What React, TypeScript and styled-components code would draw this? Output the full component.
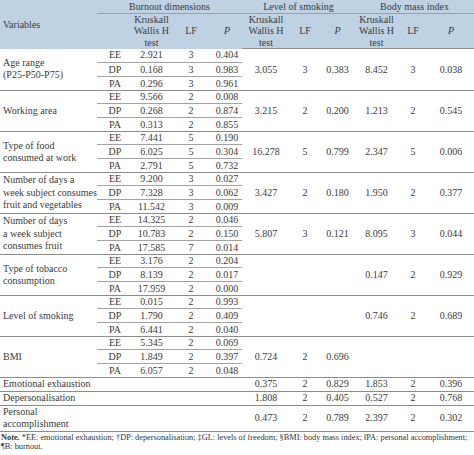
import React from "react";
import styled, { createGlobalStyle } from "styled-components";

const GlobalStyle = createGlobalStyle`
  html, body {
    margin: 0;
    padding: 0;
    background: #ffffff;
  }
  body {
    font-family: "Liberation Serif", "Times New Roman", serif;
    color: #3b3b3b;
  }
`;

const Page = styled.div`
  width: 474px;
  overflow: hidden;
`;

const Table = styled.table`
  width: 474px;
  border-collapse: collapse;
  table-layout: fixed;
  font-size: 10px;
`;

const HeadCell = styled.th<{ $left?: boolean; $underline?: boolean; $italic?: boolean }>`
  background: #bfd2e4;
  font-weight: normal;
  font-style: ${(p) => (p.$italic ? "italic" : "normal")};
  padding: 0 0 0 ${(p) => (p.$left ? "3px" : "0")};
  text-align: ${(p) => (p.$left ? "left" : "center")};
  line-height: 11.5px;
  white-space: nowrap;
  color: #3a3a3a;
  border-bottom: ${(p) => (p.$underline ? "1px solid #8fa3b8" : "none")};
`;

const GroupRow = styled.tr`
  height: 13px;
`;

const SubHeadRow = styled.tr`
  height: 34px;
`;

const BodyRow = styled.tr<{ $h?: number }>`
  height: ${(p) => p.$h ?? 14}px;
`;

const Label = styled.td<{ $top?: boolean }>`
  padding: 0 0 0 3px;
  text-align: left;
  vertical-align: middle;
  line-height: 12.5px;
  white-space: nowrap;
  border-top: ${(p) => (p.$top ? "1px solid #8c8c8c" : "none")};
`;

const Cell = styled.td<{ $line?: "group" | "sub" | "none" }>`
  padding: 0;
  text-align: center;
  vertical-align: middle;
  line-height: 12px;
  white-space: nowrap;
  border-top: ${(p) =>
    p.$line === "group"
      ? "1px solid #8c8c8c"
      : p.$line === "sub"
      ? "1px solid #a3a3a3"
      : "none"};
`;

const LastRow = styled.tr<{ $h?: number }>`
  height: ${(p) => p.$h ?? 24}px;
  border-bottom: 1px solid #8c8c8c;
`;

const Note = styled.p`
  margin: 0;
  padding: 1px 0 0 1px;
  font-size: 8.3px;
  line-height: 9.5px;
  white-space: nowrap;
  color: #333;
`;

const Bold = styled.b`
  font-weight: bold;
`;

type Triple = [string, string, string];

type Group = {
  label: string[];
  rows: [string, string, string, string][];
  smoke: Triple | null;
  bmi: Triple | null;
};

const groups: Group[] = [
  {
    label: ["Age range", "(P25-P50-P75)"],
    rows: [
      ["EE", "2.921", "3", "0.404"],
      ["DP", "0.168", "3", "0.983"],
      ["PA", "0.296", "3", "0.961"],
    ],
    smoke: ["3.055", "3", "0.383"],
    bmi: ["8.452", "3", "0.038"],
  },
  {
    label: ["Working area"],
    rows: [
      ["EE", "9.566", "2", "0.008"],
      ["DP", "0.268", "2", "0.874"],
      ["PA", "0.313", "2", "0.855"],
    ],
    smoke: ["3.215", "2", "0.200"],
    bmi: ["1.213", "2", "0.545"],
  },
  {
    label: ["Type of food", "consumed at work"],
    rows: [
      ["EE", "7.441", "5", "0.190"],
      ["DP", "6.025", "5", "0.304"],
      ["PA", "2.791", "5", "0.732"],
    ],
    smoke: ["16.278", "5", "0.799"],
    bmi: ["2.347", "5", "0.006"],
  },
  {
    label: ["Number of days a", "week subject consumes", "fruit and vegetables"],
    rows: [
      ["EE", "9.200", "3", "0.027"],
      ["DP", "7.328", "3", "0.062"],
      ["PA", "11.542", "3", "0.009"],
    ],
    smoke: ["3.427", "2", "0.180"],
    bmi: ["1.950", "2", "0.377"],
  },
  {
    label: ["Number of days", "a week subject", "consumes fruit"],
    rows: [
      ["EE", "14.325", "2", "0.046"],
      ["DP", "10.783", "2", "0.150"],
      ["PA", "17.585", "7", "0.014"],
    ],
    smoke: ["5.807", "3", "0.121"],
    bmi: ["8.095", "3", "0.044"],
  },
  {
    label: ["Type of tobacco", "consumption"],
    rows: [
      ["EE", "3.176", "2", "0.204"],
      ["DP", "8.139", "2", "0.017"],
      ["PA", "17.959", "2", "0.000"],
    ],
    smoke: null,
    bmi: ["0.147", "2", "0.929"],
  },
  {
    label: ["Level of smoking"],
    rows: [
      ["EE", "0.015", "2", "0.993"],
      ["DP", "1.790", "2", "0.409"],
      ["PA", "6.441", "2", "0.040"],
    ],
    smoke: null,
    bmi: ["0.746", "2", "0.689"],
  },
  {
    label: ["BMI"],
    rows: [
      ["EE", "5.345", "2", "0.069"],
      ["DP", "1.849", "2", "0.397"],
      ["PA", "6.057", "2", "0.048"],
    ],
    smoke: ["0.724", "2", "0.696"],
    bmi: null,
  },
];

const totals: { label: string[]; vals: string[]; h: number }[] = [
  { label: ["Emotional exhaustion"], vals: ["0.375", "2", "0.829", "1.853", "2", "0.396"], h: 13 },
  { label: ["Depersonalisation"], vals: ["1.808", "2", "0.405", "0.527", "2", "0.768"], h: 14 },
  { label: ["Personal", "accomplishment"], vals: ["0.473", "2", "0.789", "2.397", "2", "0.302"], h: 25 },
];

const widths = [97, 36, 37, 42, 30, 48, 30, 35, 43, 30, 46];

function Lines({ lines }: { lines: string[] }) {
  return (
    <>
      {lines.map((l, i) => (
        <React.Fragment key={i}>
          {i > 0 && <br />}
          {l}
        </React.Fragment>
      ))}
    </>
  );
}

function TestHead() {
  return (
    <>
      <HeadCell>
        Kruskall
        <br />
        Wallis H
        <br />
        test
      </HeadCell>
      <HeadCell>LF</HeadCell>
      <HeadCell $italic>P</HeadCell>
    </>
  );
}

function Spanned({ vals }: { vals: Triple | null }) {
  const v = vals ?? ["", "", ""];
  return (
    <>
      {v.map((x, i) => (
        <Cell key={i} rowSpan={3} $line="group">
          {x}
        </Cell>
      ))}
    </>
  );
}

export default function App() {
  return (
    <Page>
      <GlobalStyle />
      <Table>
        <colgroup>
          {widths.map((w, i) => (
            <col key={i} style={{ width: w }} />
          ))}
        </colgroup>
        <thead>
          <GroupRow>
            <HeadCell rowSpan={2} $left>
              Variables
            </HeadCell>
            <HeadCell colSpan={4} $underline>
              Burnout dimensions
            </HeadCell>
            <HeadCell colSpan={3} $underline>
              Level of smoking
            </HeadCell>
            <HeadCell colSpan={3} $underline>
              Body mass index
            </HeadCell>
          </GroupRow>
          <SubHeadRow>
            <HeadCell />
            <TestHead />
            <TestHead />
            <TestHead />
          </SubHeadRow>
        </thead>
        <tbody>
          {groups.map((g, gi) =>
            g.rows.map((r, ri) => (
              <BodyRow key={`${gi}-${ri}`} $h={ri === 0 && gi > 0 ? 13 : 14}>
                {ri === 0 && (
                  <Label rowSpan={3} $top={gi > 0}>
                    <Lines lines={g.label} />
                  </Label>
                )}
                {r.map((x, ci) => (
                  <Cell key={ci} $line={ri === 0 ? (gi > 0 ? "group" : "none") : "sub"}>
                    {x}
                  </Cell>
                ))}
                {ri === 0 && <Spanned vals={g.smoke} />}
                {ri === 0 && <Spanned vals={g.bmi} />}
              </BodyRow>
            ))
          )}
          {totals.map((t, ti) => {
            const Row = ti === totals.length - 1 ? LastRow : BodyRow;
            return (
              <Row key={ti} $h={t.h}>
                <Label colSpan={5} $top>
                  <Lines lines={t.label} />
                </Label>
                {t.vals.map((x, ci) => (
                  <Cell key={ci} $line="group">
                    {x}
                  </Cell>
                ))}
              </Row>
            );
          })}
        </tbody>
      </Table>
      <Note>
        <Bold>Note.</Bold> *EE: emotional exhaustion; †DP: depersonalisation; ‡GL: levels of freedom;
        §BMI: body mass index; ‖PA: personal accomplishment;
        <br />
        ¶B: burnout.
      </Note>
    </Page>
  );
}
